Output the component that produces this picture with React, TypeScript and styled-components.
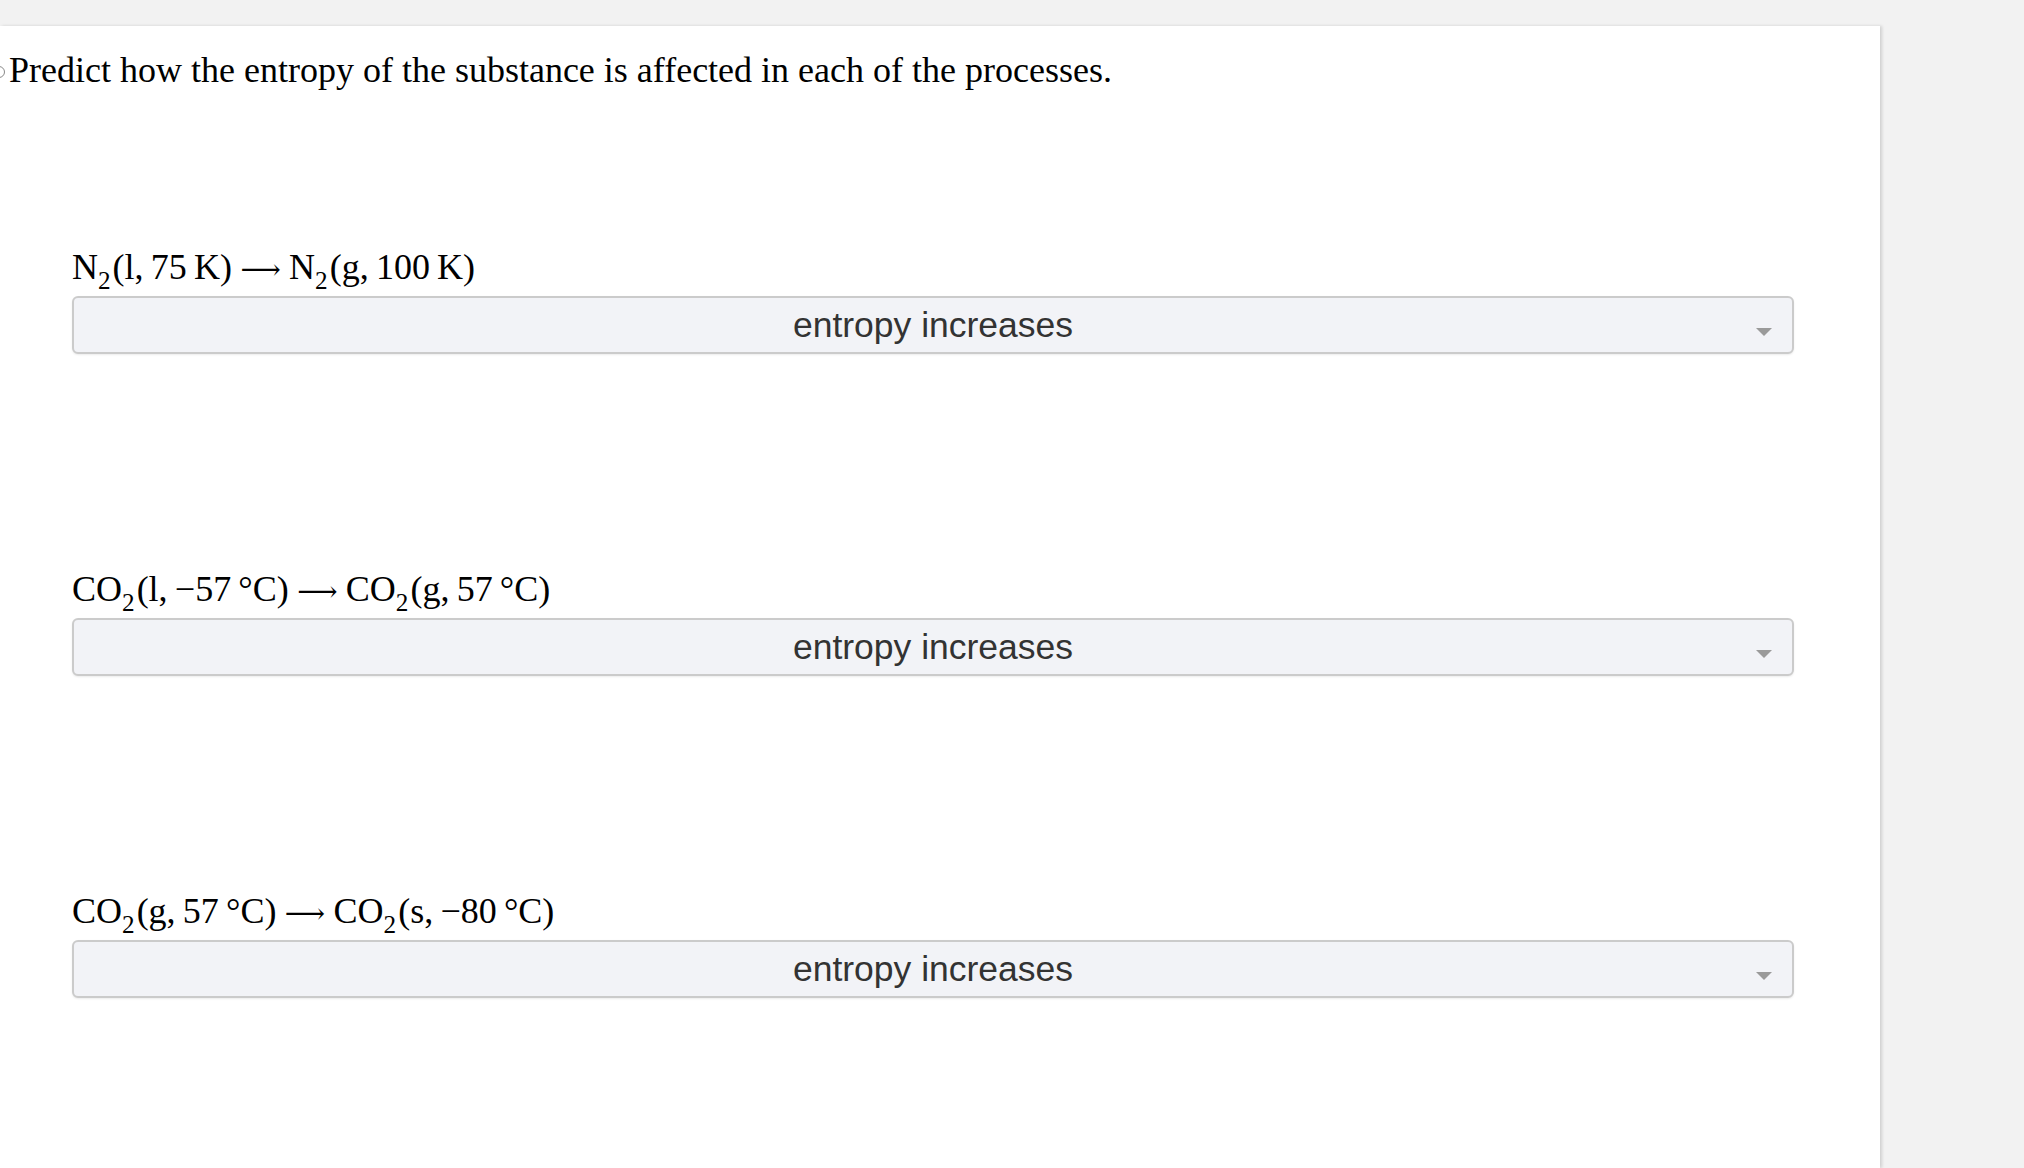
import styled, { createGlobalStyle } from "styled-components"

const Global = createGlobalStyle`
    body {
        margin: 0;
        background: #f2f2f2;
    }
`

const Page = styled.div`
    height: 1168px;
    overflow: hidden;
    padding-top: 26px;
    box-sizing: border-box;
`

const Sheet = styled.div`
    width: 1880px;
    min-height: 1142px;
    background: #fff;
    box-shadow: 2px 0 3px rgba(0, 0, 0, 0.14);
    padding-top: 22px;
    box-sizing: border-box;
`

const Prompt = styled.div`
    display: flex;
    align-items: center;
    font: 400 36px "Liberation Serif", "Times New Roman", serif;
    color: #000;
    line-height: 44px;
`

const Dot = styled.span`
    width: 10px;
    height: 10px;
    border-radius: 50%;
    border: 1.5px solid #888;
    margin-left: -7px;
    margin-right: 4px;
    margin-top: 4px;
`

const Questions = styled.div`
    display: flex;
    flex-direction: column;
    gap: 215px;
    padding: 155px 86px 0 72px;
`

const Question = styled.div`
    display: flex;
    flex-direction: column;
    gap: 6px;
`

const Equation = styled.div`
    font: 400 36px "Liberation Serif", "Times New Roman", serif;
    color: #000;
    line-height: 40px;
    white-space: nowrap;
`

const Sub = styled.sub`
    font-size: 0.7em;
    vertical-align: -0.4em;
    line-height: 0;
    margin-right: 0.08em;
`

const Arrow = styled.span`
    font-family: "DejaVu Serif", serif;
    font-size: 0.78em;
    margin: 0 0.3em;
`

const Select = styled.div`
    position: relative;
    height: 58px;
    background: #f2f3f7;
    border: 2px solid #cbcbcb;
    border-radius: 6px;
    box-shadow: 0 1px 2px rgba(0, 0, 0, 0.08);
    display: flex;
    align-items: center;
    justify-content: center;
    font: 400 35.5px "Liberation Sans", Arial, sans-serif;
    color: #333;
    box-sizing: border-box;
`

const Caret = styled.span`
    position: absolute;
    right: 20px;
    top: 50%;
    margin-top: 3px;
    width: 0;
    height: 0;
    border-left: 8px solid transparent;
    border-right: 8px solid transparent;
    border-top: 8px solid #9a9a9a;
`

type Species = { formula: string; sub: string; state: string }

const rows: { from: Species; to: Species }[] = [
    {
        from: { formula: "N", sub: "2", state: "(l,\u200975\u2009K)" },
        to: { formula: "N", sub: "2", state: "(g,\u2009100\u2009K)" },
    },
    {
        from: { formula: "CO", sub: "2", state: "(l,\u2009\u221257\u2009°C)" },
        to: { formula: "CO", sub: "2", state: "(g,\u200957\u2009°C)" },
    },
    {
        from: { formula: "CO", sub: "2", state: "(g,\u200957\u2009°C)" },
        to: { formula: "CO", sub: "2", state: "(s,\u2009\u221280\u2009°C)" },
    },
]

function Chem({ s }: { s: Species }) {
    return (
        <>
            {s.formula}
            <Sub>{s.sub}</Sub>
            {s.state}
        </>
    )
}

export default function App() {
    return (
        <Page>
            <Global />
            <Sheet>
                <Prompt>
                    <Dot />
                    Predict how the entropy of the substance is affected in each of the processes.
                </Prompt>
                <Questions>
                    {rows.map((r, i) => (
                        <Question key={i}>
                            <Equation>
                                <Chem s={r.from} />
                                <Arrow>⟶</Arrow>
                                <Chem s={r.to} />
                            </Equation>
                            <Select>
                                entropy increases
                                <Caret />
                            </Select>
                        </Question>
                    ))}
                </Questions>
            </Sheet>
        </Page>
    )
}
